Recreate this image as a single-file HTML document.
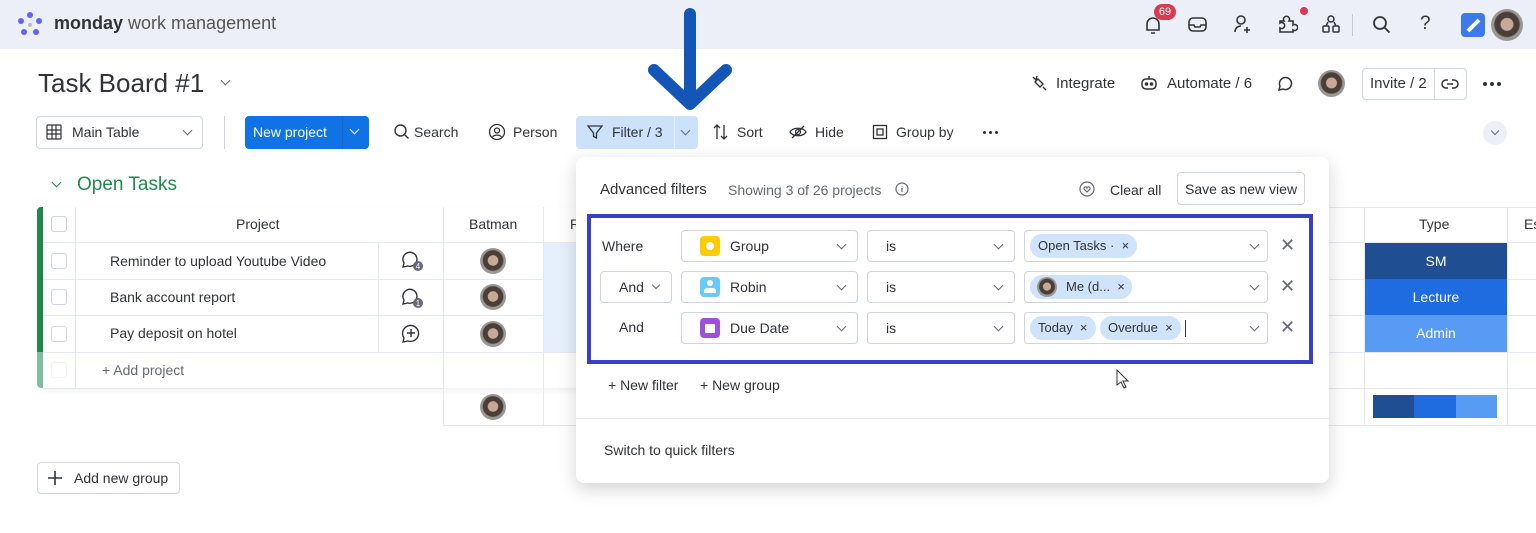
<!DOCTYPE html>
<html><head><meta charset="utf-8"><style>
*{box-sizing:border-box;margin:0;padding:0}
body{width:1536px;height:533px;overflow:hidden;background:#fff;font-family:"Liberation Sans",sans-serif;color:#323338;position:relative}
.a{position:absolute}
.t{position:absolute;white-space:nowrap}
.bx{position:absolute;border:1px solid #d0d4e4;border-radius:4px;background:#fff}
.chev{position:absolute;width:7px;height:7px;border-right:1.5px solid #676879;border-bottom:1.5px solid #676879;transform:rotate(45deg)}
.av{position:absolute;border-radius:50%;background:radial-gradient(circle at 50% 48%,#c8a896 0 26%,#4a3f38 30% 52%,#9a9894 58%)}
.hl{position:absolute;background:#e6f0fc}
.pill{position:absolute;height:24px;border-radius:12px;background:#cfe3fb;font-size:13px;line-height:24px;padding:0 8px;color:#323338;white-space:nowrap}
.x{position:absolute;font-size:18px;color:#676879}
svg{position:absolute}
</style></head><body>
<div class="a" style="left:0;top:0;width:1536px;height:49px;background:#eceff8"></div>
<svg style="left:17px;top:12px" width="28" height="24" viewBox="0 0 28 24"><g fill="#6161ff"><circle cx="4" cy="9" r="3"/><circle cx="13" cy="3" r="3"/><circle cx="22" cy="9" r="3"/><circle cx="7" cy="20" r="3"/><circle cx="19" cy="20" r="3"/></g><circle cx="13" cy="13" r="2" fill="#bbb"/></svg>
<div class="t" style="left:54px;top:13px;font-size:18px;color:#323338"><b>monday</b> <span style="color:#555">work management</span></div>
<svg style="left:1142px;top:14px" width="22" height="22" viewBox="0 0 22 22" fill="none" stroke="#323338" stroke-width="1.6"><path d="M5 16V10a6 6 0 0 1 12 0v6H5zM9 19h4"/></svg>
<div class="a" style="left:1154px;top:4px;width:22px;height:16px;border-radius:8px;background:#d83a52;color:#fff;font-size:11px;line-height:16px;text-align:center">69</div>
<svg style="left:1187px;top:15px" width="22" height="20" viewBox="0 0 22 20" fill="none" stroke="#323338" stroke-width="1.6"><rect x="2" y="3" width="17" height="13" rx="4"/><path d="M2 10h5l1 2h5l1-2h5"/></svg>
<svg style="left:1232px;top:13px" width="22" height="22" viewBox="0 0 22 22" fill="none" stroke="#323338" stroke-width="1.6"><circle cx="9" cy="7" r="4"/><path d="M3 19c0-4 3-6 6-6M15 14v6M12 17h6"/></svg>
<svg style="left:1276px;top:13px" width="22" height="22" viewBox="0 0 22 22" fill="none" stroke="#323338" stroke-width="1.6"><path d="M4 8h4a3 3 0 1 1 5 0h4v4a3 3 0 1 1 0 5v2H4v-4a3 3 0 1 0 0-5z"/></svg>
<div class="a" style="left:1300px;top:7px;width:8px;height:8px;border-radius:50%;background:#d83a52"></div>
<svg style="left:1320px;top:13px" width="22" height="22" viewBox="0 0 22 22" fill="none" stroke="#323338" stroke-width="1.5"><circle cx="11" cy="6" r="3"/><rect x="3" y="13" width="6" height="6" rx="1"/><rect x="13" y="13" width="6" height="6" rx="1"/><path d="M8 9l-2 4M14 9l2 4"/></svg>
<div class="a" style="left:1352px;top:14px;width:1px;height:22px;background:#c3c6d4"></div>
<svg style="left:1371px;top:14px" width="22" height="22" viewBox="0 0 22 22" fill="none" stroke="#323338" stroke-width="1.8"><circle cx="9" cy="9" r="6"/><path d="M13.5 13.5l5 5"/></svg>
<div class="t" style="left:1420px;top:13px;font-size:19px;color:#323338">?</div>
<div class="a" style="left:1461px;top:13px;width:24px;height:24px;border-radius:4px;background:#3b7ae8"></div>
<svg style="left:1461px;top:13px" width="24" height="24"><path d="M7 18L18 7" stroke="#fff" stroke-width="4"/></svg>
<div class="av" style="left:1491px;top:9px;width:32px;height:32px"></div>

<div class="t" style="left:38px;top:68px;font-size:26px;color:#323338">Task Board #1</div>
<div class="chev" style="left:222px;top:77px"></div>
<svg style="left:1030px;top:74px" width="18" height="18" viewBox="0 0 18 18" fill="none" stroke="#323338" stroke-width="1.4"><path d="M3 3l3 3M7 2l-1 4M5 8l5 5 3-3-5-5zM13 13l3 3"/></svg>
<div class="t" style="left:1056px;top:75px;font-size:15px">Integrate</div>
<svg style="left:1140px;top:74px" width="18" height="18" viewBox="0 0 18 18" fill="none" stroke="#323338" stroke-width="1.5"><rect x="2" y="5" width="14" height="10" rx="4"/><path d="M9 2v3"/><circle cx="6.5" cy="10" r="1" fill="#323338"/><circle cx="11.5" cy="10" r="1" fill="#323338"/></svg>
<div class="t" style="left:1167px;top:75px;font-size:15px">Automate / 6</div>
<svg style="left:1275px;top:74px" width="20" height="20" viewBox="0 0 20 20" fill="none" stroke="#323338" stroke-width="1.5"><path d="M4 16l1-4a6 6 0 1 1 3 3z"/></svg>
<div class="av" style="left:1318px;top:70px;width:27px;height:27px"></div>
<div class="bx" style="left:1362px;top:68px;width:105px;height:32px"></div>
<div class="a" style="left:1434px;top:68px;width:1px;height:32px;background:#d0d4e4"></div>
<div class="t" style="left:1370px;top:75px;font-size:15px">Invite / 2</div>
<svg style="left:1440px;top:76px" width="20" height="16" viewBox="0 0 20 16" fill="none" stroke="#323338" stroke-width="1.5"><path d="M8 4H6a4 4 0 0 0 0 8h2M12 4h2a4 4 0 0 1 0 8h-2M7 8h6"/></svg>
<div class="a" style="left:1483px;top:82px;width:4px;height:4px;border-radius:50%;background:#323338"></div>
<div class="a" style="left:1490px;top:82px;width:4px;height:4px;border-radius:50%;background:#323338"></div>
<div class="a" style="left:1497px;top:82px;width:4px;height:4px;border-radius:50%;background:#323338"></div>

<div class="bx" style="left:36px;top:116px;width:167px;height:33px"></div>
<svg style="left:46px;top:124px" width="16" height="16" viewBox="0 0 16 16" fill="none" stroke="#323338" stroke-width="1.2"><rect x="1" y="1" width="14" height="14" rx="1"/><path d="M1 6h14M1 10h14M6 1v14M10 1v14"/></svg>
<div class="t" style="left:72px;top:124px;font-size:14px">Main Table</div>
<div class="chev" style="left:184px;top:127px"></div>
<div class="a" style="left:224px;top:116px;width:1px;height:33px;background:#d0d4e4"></div>
<div class="a" style="left:245px;top:116px;width:124px;height:33px;border-radius:4px;background:#0f73e6"></div>
<div class="a" style="left:342px;top:116px;width:1px;height:33px;background:#2a60b8"></div>
<div class="t" style="left:253px;top:124px;font-size:14px;color:#fff">New project</div>
<div class="chev" style="left:351px;top:126px;border-color:#fff"></div>
<svg style="left:393px;top:123px" width="18" height="18" viewBox="0 0 18 18" fill="none" stroke="#323338" stroke-width="1.4"><circle cx="7.5" cy="7.5" r="5.5"/><path d="M11.5 11.5l4 4"/></svg>
<div class="t" style="left:414px;top:124px;font-size:14px">Search</div>
<svg style="left:488px;top:123px" width="18" height="18" viewBox="0 0 18 18" fill="none" stroke="#323338" stroke-width="1.3"><circle cx="9" cy="9" r="7.5"/><circle cx="9" cy="7.5" r="2.5"/><path d="M4.5 14c1.5-2.5 7.5-2.5 9 0"/></svg>
<div class="t" style="left:513px;top:124px;font-size:14px">Person</div>
<div class="a" style="left:576px;top:116px;width:122px;height:33px;border-radius:4px;background:#cce1fa"></div>
<div class="a" style="left:674px;top:116px;width:1px;height:33px;background:#e6f0fc"></div>
<svg style="left:586px;top:123px" width="18" height="18" viewBox="0 0 18 18" fill="none" stroke="#323338" stroke-width="1.3"><path d="M2 3h14l-5.5 7v5l-3-1.5V10z"/></svg>
<div class="t" style="left:612px;top:124px;font-size:14px">Filter / 3</div>
<div class="chev" style="left:682px;top:127px"></div>
<svg style="left:712px;top:123px" width="18" height="18" viewBox="0 0 18 18" fill="none" stroke="#323338" stroke-width="1.3"><path d="M5 16V2M2 5l3-3 3 3M12 2v14M9 13l3 3 3-3"/></svg>
<div class="t" style="left:737px;top:124px;font-size:14px">Sort</div>
<svg style="left:789px;top:124px" width="18" height="16" viewBox="0 0 18 16" fill="none" stroke="#323338" stroke-width="1.3"><path d="M1 8c3-5 13-5 16 0-3 5-13 5-16 0z"/><circle cx="9" cy="8" r="2.5"/><path d="M3 14L15 2"/></svg>
<div class="t" style="left:815px;top:124px;font-size:14px">Hide</div>
<svg style="left:872px;top:124px" width="16" height="16" viewBox="0 0 16 16" fill="none" stroke="#323338" stroke-width="1.3"><rect x="1.5" y="1.5" width="13" height="13"/><rect x="5" y="5" width="6" height="6"/></svg>
<div class="t" style="left:896px;top:124px;font-size:14px">Group by</div>
<div class="a" style="left:983px;top:131px;width:3px;height:3px;border-radius:50%;background:#323338"></div>
<div class="a" style="left:989px;top:131px;width:3px;height:3px;border-radius:50%;background:#323338"></div>
<div class="a" style="left:995px;top:131px;width:3px;height:3px;border-radius:50%;background:#323338"></div>
<div class="a" style="left:1483px;top:121px;width:24px;height:24px;border-radius:50%;background:#eceff8"></div>
<div class="chev" style="left:1492px;top:128px;width:6px;height:6px"></div>

<svg style="left:640px;top:0" width="100" height="115" viewBox="0 0 100 115" fill="none" stroke="#1456b8" stroke-width="12" stroke-linecap="round" stroke-linejoin="round"><path d="M50 14V104M14 70L50 104 86 70"/></svg>

<div class="chev" style="left:53px;top:179px;border-color:#1f8a4c"></div>
<div class="t" style="left:77px;top:174px;font-size:19px;color:#1f8a4c">Open Tasks</div>

<div class="a" style="left:37px;top:207px;width:6px;height:145px;background:#1f8a4c;border-radius:4px 0 0 0"></div>
<div class="a" style="left:37px;top:352px;width:6px;height:36px;background:#80c0a0;border-radius:0 0 0 4px"></div>
<div class="a" style="left:43px;top:207px;width:540px;height:181px;box-shadow:0 3px 6px rgba(0,0,0,.06)"></div>
<div class="a" style="left:43px;top:242px;width:540px;height:1px;background:#e6e9ef"></div>
<div class="a" style="left:43px;top:279px;width:540px;height:1px;background:#e6e9ef"></div>
<div class="a" style="left:43px;top:315px;width:540px;height:1px;background:#e6e9ef"></div>
<div class="a" style="left:43px;top:352px;width:540px;height:1px;background:#e6e9ef"></div>
<div class="a" style="left:43px;top:388px;width:400px;height:1px;background:#e6e9ef"></div>
<div class="a" style="left:75px;top:207px;width:1px;height:181px;background:#e6e9ef"></div>
<div class="a" style="left:378px;top:242px;width:1px;height:110px;background:#e6e9ef"></div>
<div class="a" style="left:443px;top:207px;width:1px;height:218px;background:#e6e9ef"></div>
<div class="a" style="left:543px;top:207px;width:1px;height:218px;background:#e6e9ef"></div>
<div class="a" style="left:443px;top:425px;width:140px;height:1px;background:#e6e9ef"></div>
<div class="hl" style="left:544px;top:243px;width:40px;height:109px"></div>
<div class="a" style="left:51px;top:216px;width:16px;height:16px;border:1px solid #d0d4e4;border-radius:3px"></div>
<div class="a" style="left:51px;top:253px;width:16px;height:16px;border:1px solid #d0d4e4;border-radius:3px"></div>
<div class="a" style="left:51px;top:289px;width:16px;height:16px;border:1px solid #d0d4e4;border-radius:3px"></div>
<div class="a" style="left:51px;top:326px;width:16px;height:16px;border:1px solid #d0d4e4;border-radius:3px"></div>
<div class="a" style="left:51px;top:362px;width:16px;height:16px;border:1px solid #f0f2f5;border-radius:3px"></div>
<div class="t" style="left:236px;top:216px;font-size:14px">Project</div>
<div class="t" style="left:469px;top:216px;font-size:14px">Batman</div>
<div class="t" style="left:570px;top:216px;font-size:14px">R</div>
<div class="t" style="left:110px;top:253px;font-size:14px">Reminder to upload Youtube Video</div>
<div class="t" style="left:110px;top:289px;font-size:14px">Bank account report</div>
<div class="t" style="left:110px;top:325px;font-size:14px">Pay deposit on hotel</div>
<div class="t" style="left:102px;top:362px;font-size:14px;color:#676879">+ Add project</div>
<svg style="left:400px;top:250px" width="26" height="24" viewBox="0 0 26 24" fill="none" stroke="#323338" stroke-width="1.4"><path d="M3 17l1-4a7 7 0 1 1 4 3z"/><circle cx="18" cy="16" r="5" fill="#676879" stroke="none"/><text x="18" y="19" font-size="8" fill="#fff" stroke="none" text-anchor="middle" font-family="Liberation Sans">4</text></svg>
<svg style="left:400px;top:287px" width="26" height="24" viewBox="0 0 26 24" fill="none" stroke="#323338" stroke-width="1.4"><path d="M3 17l1-4a7 7 0 1 1 4 3z"/><circle cx="18" cy="16" r="5" fill="#676879" stroke="none"/><text x="18" y="19" font-size="8" fill="#fff" stroke="none" text-anchor="middle" font-family="Liberation Sans">1</text></svg>
<svg style="left:400px;top:323px" width="22" height="22" viewBox="0 0 22 22" fill="none" stroke="#323338" stroke-width="1.4"><path d="M3 19l1-4a8 8 0 1 1 4 3z"/><path d="M11 6v8M7 10h8"/></svg>
<div class="av" style="left:480px;top:248px;width:26px;height:26px"></div>
<div class="av" style="left:480px;top:284px;width:26px;height:26px"></div>
<div class="av" style="left:480px;top:321px;width:26px;height:26px"></div>
<div class="av" style="left:480px;top:394px;width:26px;height:26px"></div>

<div class="a" style="left:1329px;top:207px;width:207px;height:1px;background:#e6e9ef"></div>
<div class="a" style="left:1329px;top:242px;width:207px;height:1px;background:#e6e9ef"></div>
<div class="a" style="left:1329px;top:279px;width:207px;height:1px;background:#e6e9ef"></div>
<div class="a" style="left:1329px;top:315px;width:207px;height:1px;background:#e6e9ef"></div>
<div class="a" style="left:1329px;top:352px;width:207px;height:1px;background:#e6e9ef"></div>
<div class="a" style="left:1329px;top:388px;width:207px;height:1px;background:#e6e9ef"></div>
<div class="a" style="left:1329px;top:425px;width:207px;height:1px;background:#e6e9ef"></div>
<div class="a" style="left:1364px;top:207px;width:1px;height:218px;background:#e6e9ef"></div>
<div class="a" style="left:1507px;top:207px;width:1px;height:218px;background:#e6e9ef"></div>
<div class="t" style="left:1419px;top:216px;font-size:14px">Type</div>
<div class="t" style="left:1524px;top:216px;font-size:14px">Es</div>
<div class="a" style="left:1365px;top:243px;width:142px;height:36px;background:#1f4e93;color:#fff;font-size:14px;line-height:36px;text-align:center">SM</div>
<div class="a" style="left:1365px;top:279px;width:142px;height:36px;background:#1e6ce0;color:#fff;font-size:14px;line-height:36px;text-align:center">Lecture</div>
<div class="a" style="left:1365px;top:315px;width:142px;height:37px;background:#579bf5;color:#fff;font-size:14px;line-height:37px;text-align:center">Admin</div>
<div class="a" style="left:1373px;top:395px;width:41px;height:23px;background:#1f4e93"></div>
<div class="a" style="left:1414px;top:395px;width:42px;height:23px;background:#1e6ce0"></div>
<div class="a" style="left:1456px;top:395px;width:41px;height:23px;background:#579bf5"></div>

<div class="bx" style="left:37px;top:462px;width:143px;height:32px"></div>
<svg style="left:46px;top:469px" width="18" height="18"><path d="M9 2v14M2 9h14" stroke="#323338" stroke-width="1.6"/></svg>
<div class="t" style="left:74px;top:470px;font-size:14px">Add new group</div>

<div class="a" style="left:576px;top:157px;width:753px;height:326px;background:#fff;border-radius:8px;box-shadow:0 6px 18px rgba(0,0,0,.18)"></div>
<div class="t" style="left:600px;top:181px;font-size:15px">Advanced filters</div>
<div class="t" style="left:728px;top:182px;font-size:14px;color:#676879">Showing 3 of 26 projects</div>
<svg style="left:895px;top:182px" width="14" height="14" viewBox="0 0 14 14" fill="none" stroke="#676879" stroke-width="1.2"><circle cx="7" cy="7" r="6"/><path d="M7 6v4M7 4v.5"/></svg>
<svg style="left:1078px;top:180px" width="18" height="18" viewBox="0 0 18 18" fill="none" stroke="#676879" stroke-width="1.2"><circle cx="9" cy="9" r="7"/><path d="M9 12l-3-3a1.5 1.5 0 0 1 3-1 1.5 1.5 0 0 1 3 1z"/></svg>
<div class="t" style="left:1110px;top:182px;font-size:14px">Clear all</div>
<div class="bx" style="left:1177px;top:172px;width:128px;height:33px"></div>
<div class="t" style="left:1185px;top:181px;font-size:14px">Save as new view</div>
<div class="a" style="left:587px;top:214px;width:726px;height:150px;border:4px solid #3a40c2"></div>
<div class="t" style="left:602px;top:238px;font-size:14px">Where</div>
<div class="bx" style="left:681px;top:230px;width:177px;height:32px"></div>
<div class="a" style="left:700px;top:236px;width:20px;height:20px;border-radius:4px;background:#fdcc00"></div>
<div class="a" style="left:706px;top:242px;width:8px;height:8px;border-radius:50%;background:#fff"></div>
<div class="t" style="left:730px;top:238px;font-size:14px">Group</div>
<div class="chev" style="left:838px;top:241px"></div>
<div class="bx" style="left:867px;top:230px;width:148px;height:32px"></div>
<div class="t" style="left:886px;top:238px;font-size:14px">is</div>
<div class="chev" style="left:995px;top:241px"></div>
<div class="bx" style="left:1024px;top:230px;width:244px;height:32px"></div>
<div class="pill" style="left:1030px;top:234px">Open Tasks · &nbsp;×</div>
<div class="chev" style="left:1251px;top:241px"></div>
<div class="x" style="left:1280px;top:235px">✕</div>
<div class="bx" style="left:600px;top:271px;width:72px;height:32px"></div>
<div class="t" style="left:619px;top:279px;font-size:14px">And</div>
<div class="chev" style="left:653px;top:282px;width:6px;height:6px"></div>
<div class="bx" style="left:681px;top:271px;width:177px;height:32px"></div>
<div class="a" style="left:700px;top:277px;width:20px;height:20px;border-radius:4px;background:#66ccff"></div>
<div class="a" style="left:707px;top:280px;width:6px;height:6px;border-radius:50%;background:#fff"></div>
<div class="a" style="left:704px;top:288px;width:12px;height:5px;border-radius:3px 3px 0 0;background:#fff"></div>
<div class="t" style="left:730px;top:279px;font-size:14px">Robin</div>
<div class="chev" style="left:838px;top:282px"></div>
<div class="bx" style="left:867px;top:271px;width:148px;height:32px"></div>
<div class="t" style="left:886px;top:279px;font-size:14px">is</div>
<div class="chev" style="left:995px;top:282px"></div>
<div class="bx" style="left:1024px;top:271px;width:244px;height:32px"></div>
<div class="pill" style="left:1030px;top:275px;width:102px;padding-left:36px">Me (d... &nbsp;×</div>
<div class="av" style="left:1037px;top:277px;width:20px;height:20px"></div>
<div class="chev" style="left:1251px;top:282px"></div>
<div class="x" style="left:1280px;top:276px">✕</div>
<div class="t" style="left:619px;top:319px;font-size:14px">And</div>
<div class="bx" style="left:681px;top:312px;width:177px;height:32px"></div>
<div class="a" style="left:700px;top:318px;width:20px;height:20px;border-radius:4px;background:#9d50dd"></div>
<div class="a" style="left:705px;top:324px;width:10px;height:9px;border-radius:1px;background:#fff"></div>
<div class="t" style="left:730px;top:320px;font-size:14px">Due Date</div>
<div class="chev" style="left:838px;top:323px"></div>
<div class="bx" style="left:867px;top:312px;width:148px;height:32px"></div>
<div class="t" style="left:886px;top:320px;font-size:14px">is</div>
<div class="chev" style="left:995px;top:323px"></div>
<div class="bx" style="left:1024px;top:312px;width:244px;height:32px"></div>
<div class="pill" style="left:1030px;top:316px">Today &nbsp;×</div>
<div class="pill" style="left:1100px;top:316px">Overdue &nbsp;×</div>
<div class="a" style="left:1185px;top:320px;width:1px;height:17px;background:#323338"></div>
<div class="chev" style="left:1251px;top:323px"></div>
<div class="x" style="left:1280px;top:317px">✕</div>
<div class="t" style="left:608px;top:377px;font-size:14px;color:#323338">+ New filter</div>
<div class="t" style="left:700px;top:377px;font-size:14px;color:#323338">+ New group</div>
<svg style="left:1116px;top:369px" width="14" height="20" viewBox="0 0 14 20"><path d="M1 1v15l4-3 3 6 2-1-3-6h5z" fill="#fff" stroke="#323338" stroke-width="1"/></svg>
<div class="a" style="left:576px;top:418px;width:753px;height:1px;background:#e6e9ef"></div>
<div class="t" style="left:604px;top:442px;font-size:14px">Switch to quick filters</div>
</body></html>
